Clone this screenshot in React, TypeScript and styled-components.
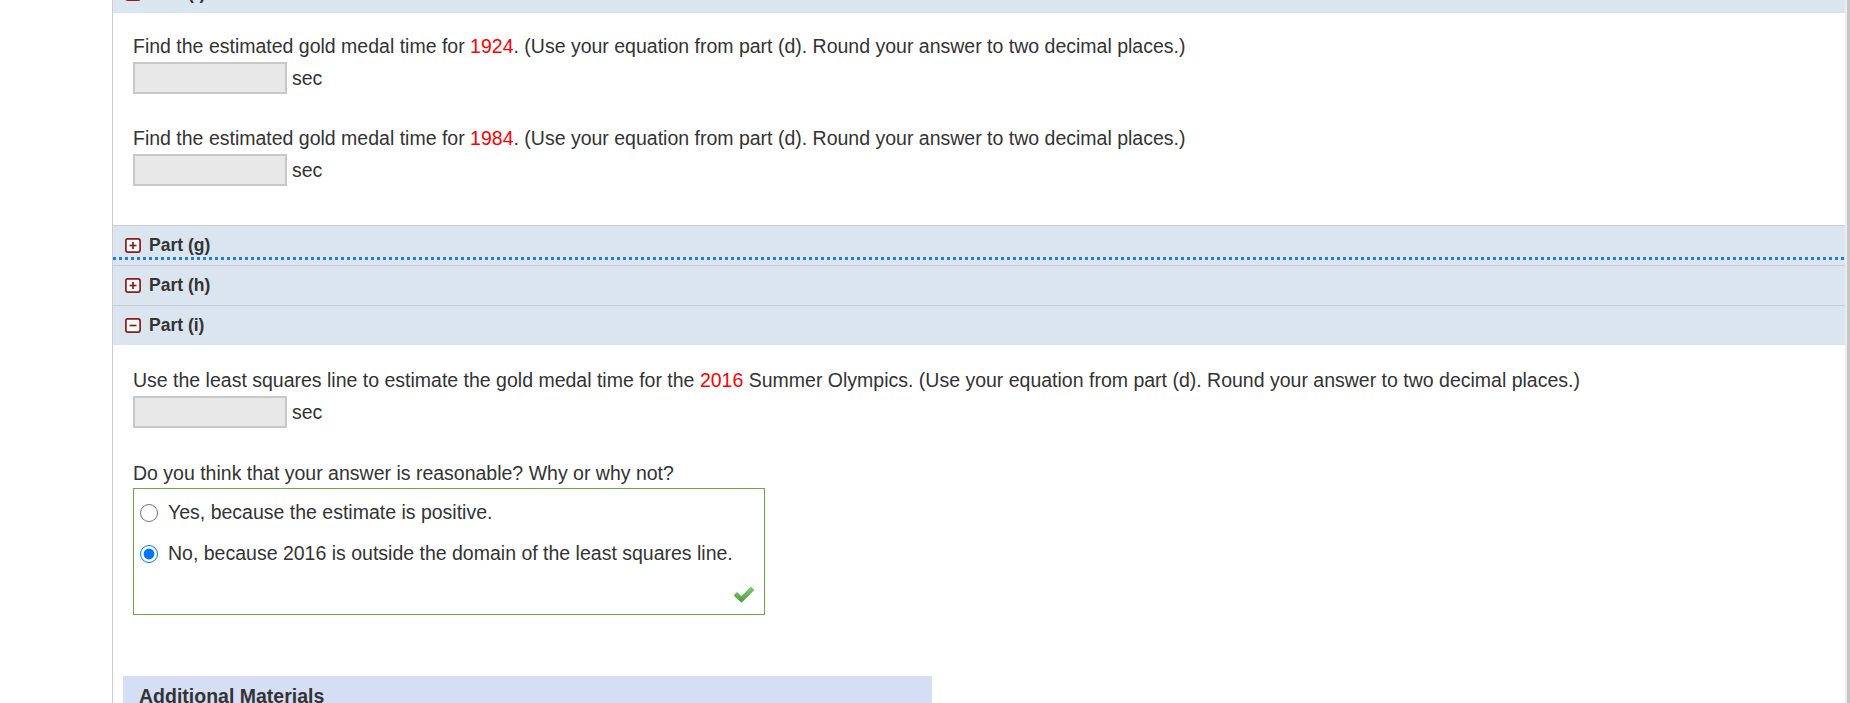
import React from "react";
import styled, { createGlobalStyle, css } from "styled-components";

const Global = createGlobalStyle`
  html, body {
    margin: 0;
    padding: 0;
    overflow: hidden;
    background: #ffffff;
  }
  body {
    font-family: "Liberation Sans", Arial, sans-serif;
    color: #333333;
  }
  * { box-sizing: border-box; }
`;

const Page = styled.div`
  display: flex;
  height: 703px;
  padding-left: 112px;
  border-right: 3px solid #c6c6c6;
  overflow: hidden;
`;

const Main = styled.main`
  flex: 1;
  display: flex;
  flex-direction: column;
  border-left: 1px solid #cccccc;
  border-right: 2px solid #ededed;
  & > * {
    flex-shrink: 0;
  }
`;

const PartHeader = styled.div<{ $clipped?: boolean; $focused?: boolean }>`
  position: relative;
  display: flex;
  align-items: center;
  gap: 8px;
  height: 40px;
  padding-left: 12px;
  background: #dae5ef;
  border-top: 1px solid ${(p) => (p.$clipped ? "#dae5ef" : "#c8ced4")};
  margin-top: ${(p) => (p.$clipped ? "-27px" : "0")};
  font-size: 17.5px;
  font-weight: bold;
  color: #333333;
  ${(p) =>
    p.$focused &&
    css`
      &::after {
        content: "";
        position: absolute;
        left: 0;
        right: 0;
        bottom: 5px;
        height: 3px;
        background: repeating-linear-gradient(
          to right,
          #1a7fe0 0 3px,
          transparent 3px 6px
        );
      }
    `}
`;

const PartBody = styled.section<{ $pt: number; $pb: number }>`
  padding: ${(p) => p.$pt}px 20px ${(p) => p.$pb}px;
`;

const Question = styled.div<{ $mt?: number }>`
  margin-top: ${(p) => p.$mt ?? 0}px;
`;

const Prompt = styled.p`
  margin: 0;
  font-size: 19.5px;
  line-height: 25px;
`;

const Red = styled.span`
  color: #ff0000;
`;

const AnswerRow = styled.div`
  display: flex;
  align-items: center;
  gap: 5px;
  margin-top: 3px;
  font-size: 19.5px;
`;

const Field = styled.input`
  width: 154px;
  height: 32px;
  margin: 0;
  padding: 0 4px;
  border: 2px solid #c8c8c8;
  background: #e8e8e8;
  font-family: inherit;
  font-size: 18px;
`;

const Choices = styled.div`
  margin-top: 2px;
  width: 632px;
  display: flex;
  flex-direction: column;
  padding: 3px 9px 10px 6px;
  border: 1px solid #6aab40;
`;

const Choice = styled.label`
  display: flex;
  align-items: center;
  gap: 10px;
  height: 41px;
  font-size: 19.5px;
`;

const Radio = styled.input`
  width: 18px;
  height: 18px;
  margin: 0;
`;

const CheckRow = styled.div`
  display: flex;
  justify-content: flex-end;
  margin-top: 11px;
`;

const Additional = styled.div`
  margin: 61px 0 0 10px;
  width: 809px;
  padding: 9px 16px 13px;
  background: #d6def6;
  font-size: 19.5px;
  line-height: 23px;
  font-weight: bold;
  color: #333333;
`;

const ToggleIcon = ({ open }: { open: boolean }) => (
  <svg width="16" height="15" viewBox="0 0 16 15" aria-hidden>
    <rect x="0.9" y="0.9" width="14.2" height="13.2" rx="2" fill="#ffffff" stroke="#8e1b1b" strokeWidth="1.7" />
    <line x1="4.5" y1="7.5" x2="11.5" y2="7.5" stroke="#8e1b1b" strokeWidth="1.7" />
    {!open && <line x1="8" y1="4" x2="8" y2="11" stroke="#8e1b1b" strokeWidth="1.7" />}
  </svg>
);

const CheckMark = () => (
  <svg width="22" height="19" viewBox="0 0 22 19" aria-hidden>
    <defs>
      <linearGradient id="chk" x1="0" y1="0" x2="0" y2="1">
        <stop offset="0" stopColor="#7fcf6f" />
        <stop offset="1" stopColor="#4c9a3f" />
      </linearGradient>
    </defs>
    <path d="M0.5 10.5 L4 7 L8.5 11.2 L18 1.5 L21.5 5 L8.5 17.8 Z" fill="url(#chk)" />
  </svg>
);

export default function App() {
  return (
    <>
      <Global />
      <Page>
        <Main>
          <PartHeader $clipped>
            <ToggleIcon open />
            <span>Part (f)</span>
          </PartHeader>
          <PartBody $pt={21} $pb={39}>
            <Question>
              <Prompt>
                Find the estimated gold medal time for <Red>1924</Red>. (Use your equation from part (d). Round your answer to two decimal places.)
              </Prompt>
              <AnswerRow>
                <Field type="text" />
                <span>sec</span>
              </AnswerRow>
            </Question>
            <Question $mt={32}>
              <Prompt>
                Find the estimated gold medal time for <Red>1984</Red>. (Use your equation from part (d). Round your answer to two decimal places.)
              </Prompt>
              <AnswerRow>
                <Field type="text" />
                <span>sec</span>
              </AnswerRow>
            </Question>
          </PartBody>
          <PartHeader $focused>
            <ToggleIcon open={false} />
            <span>Part (g)</span>
          </PartHeader>
          <PartHeader>
            <ToggleIcon open={false} />
            <span>Part (h)</span>
          </PartHeader>
          <PartHeader>
            <ToggleIcon open />
            <span>Part (i)</span>
          </PartHeader>
          <PartBody $pt={23} $pb={0}>
            <Question>
              <Prompt>
                Use the least squares line to estimate the gold medal time for the <Red>2016</Red> Summer Olympics. (Use your equation from part (d). Round your answer to two decimal places.)
              </Prompt>
              <AnswerRow>
                <Field type="text" />
                <span>sec</span>
              </AnswerRow>
            </Question>
            <Question $mt={33}>
              <Prompt>Do you think that your answer is reasonable? Why or why not?</Prompt>
              <Choices>
                <Choice>
                  <Radio type="radio" name="reasonable" />
                  <span>Yes, because the estimate is positive.</span>
                </Choice>
                <Choice>
                  <Radio type="radio" name="reasonable" defaultChecked />
                  <span>No, because 2016 is outside the domain of the least squares line.</span>
                </Choice>
                <CheckRow>
                  <CheckMark />
                </CheckRow>
              </Choices>
            </Question>
          </PartBody>
          <Additional>Additional Materials</Additional>
        </Main>
      </Page>
    </>
  );
}
